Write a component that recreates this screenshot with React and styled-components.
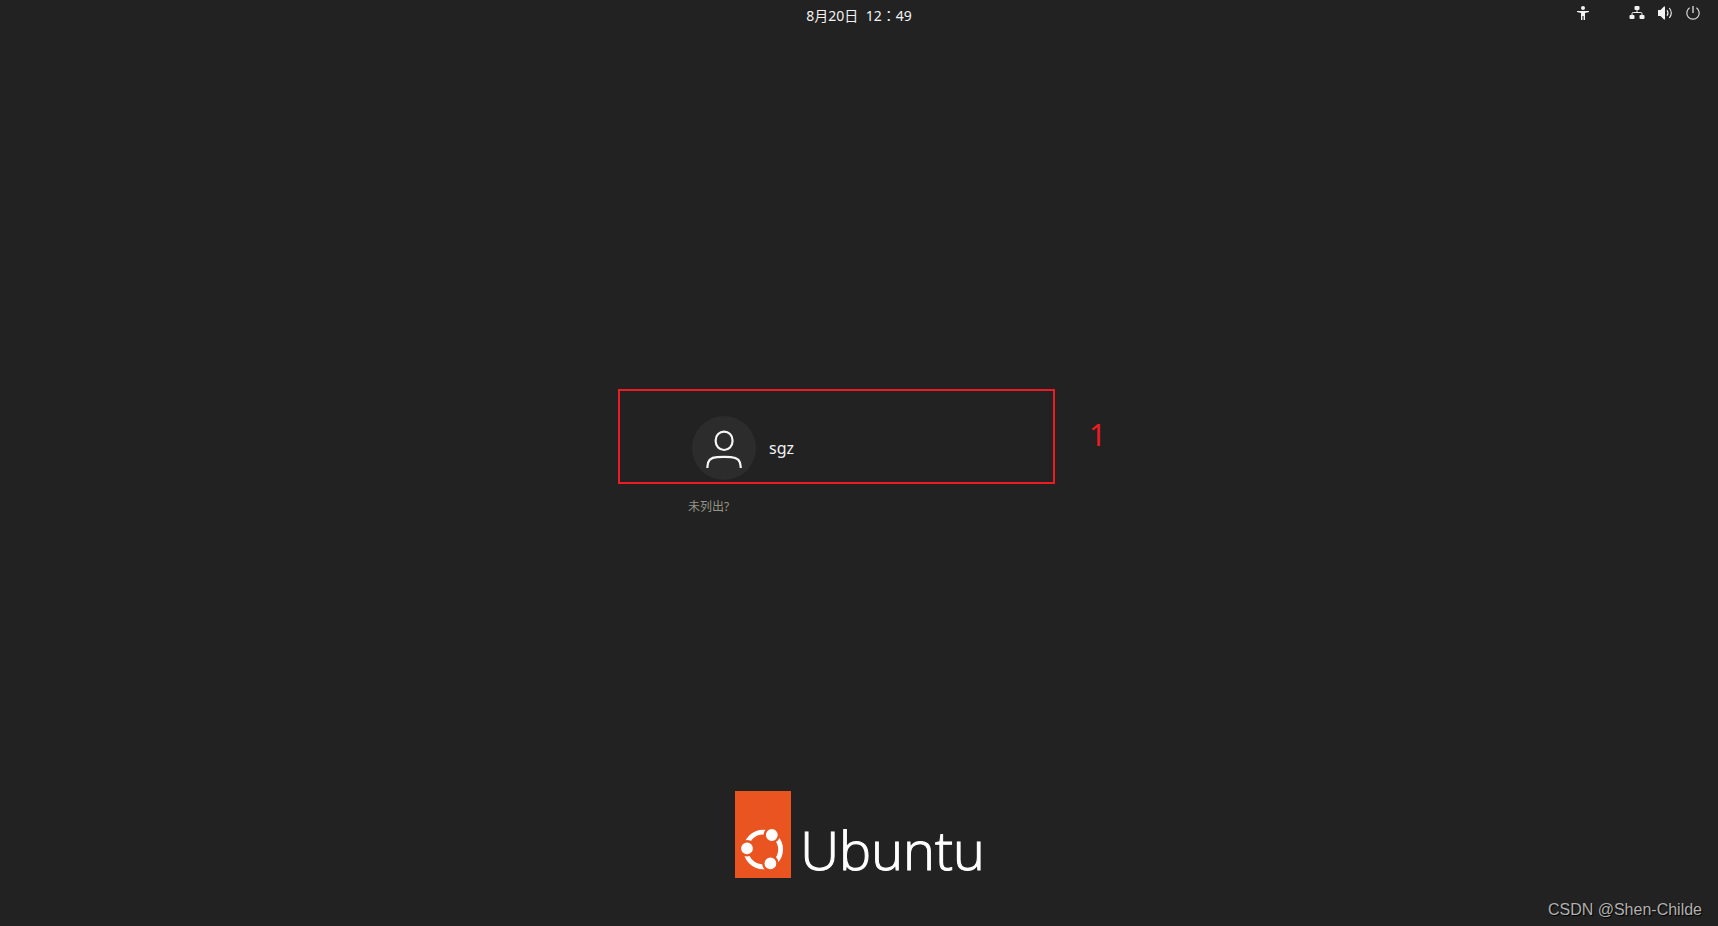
import React from 'react';
import styled, { createGlobalStyle } from 'styled-components';

const GlobalStyle = createGlobalStyle`
  * {
    box-sizing: border-box;
  }

  body {
    margin: 0;
    background: #222222;
    color: #f2f2f2;
    font-family: 'Noto Sans', 'Noto Sans CJK SC', sans-serif;
  }

  button {
    border: 0;
    padding: 0;
    background: none;
    color: inherit;
    font: inherit;
    cursor: pointer;
  }
`;

const Screen = styled.div`
  display: flex;
  flex-direction: column;
  min-height: 100vh;
  overflow: hidden;
`;

const TopBar = styled.header`
  display: grid;
  grid-template-columns: 1fr auto 1fr;
  align-items: start;
  padding: 5px 17px 0;
`;

const Clock = styled.button`
  grid-column: 2;
  font-family: 'Noto Sans', 'Noto Sans CJK TC', sans-serif;
  font-size: 14px;
  line-height: 22px;
`;

const StatusArea = styled.div`
  display: flex;
  justify-content: flex-end;
  gap: 38px;
`;

const SystemMenu = styled.div`
  display: flex;
  gap: 12px;
`;

const StatusButton = styled.button`
  display: flex;

  svg {
    display: block;
    width: 16px;
    height: 16px;
  }
`;

const Main = styled.main`
  flex: 1;
  display: flex;
  flex-direction: column;
  align-items: center;
  justify-content: center;
  padding-top: 110px;
`;

const UserList = styled.div`
  position: relative;
  width: 342px;
  max-width: 100%;
`;

const UserButton = styled.button`
  display: flex;
  align-items: center;
  gap: 13px;
  width: 100%;
  padding: 4px;
  font-size: 16px;
  line-height: 24px;
`;

const Avatar = styled.span`
  display: flex;
  align-items: center;
  justify-content: center;
  width: 64px;
  height: 64px;
  border-radius: 50%;
  background: #2c2c2c;
`;

const NotListed = styled.button`
  display: block;
  margin-top: 13px;
  color: #949488;
  font-size: 12px;
  line-height: 20px;
`;

const Highlight = styled.div`
  position: absolute;
  top: -23px;
  left: -70px;
  width: 437px;
  height: 95px;
  border: 2px solid #ed1c24;
  pointer-events: none;
`;

const StepNumber = styled.span`
  position: absolute;
  top: 8px;
  left: 100%;
  margin-left: 59px;
  color: #ed1c24;
  font-size: 30px;
  line-height: 1;
`;

const Footer = styled.footer`
  display: flex;
  justify-content: center;
  padding: 0 0 48px 2px;
`;

const Brand = styled.div`
  display: flex;
  align-items: flex-end;
  gap: 9px;
`;

const Wordmark = styled.span`
  color: #ffffff;
  font-family: 'Open Sans', 'Noto Sans', sans-serif;
  font-size: 54px;
  font-weight: 300;
  line-height: 58px;
  -webkit-text-stroke: 1px #ffffff;
`;

const Watermark = styled.div`
  position: absolute;
  right: 16px;
  bottom: 6px;
  color: #b0b0b0;
  font-family: 'Liberation Sans', Arial, sans-serif;
  font-size: 16px;
  line-height: 20px;
  text-shadow: 1px 1px 1px #000000;
`;

const AccessibilityIcon = () => (
  <svg viewBox="0 0 16 16" fill="#f2f2f2" aria-hidden="true">
    <circle cx="8" cy="3" r="2" />
    <path d="M2 6h12v1l-4 1v7H8.6v-4H7.4v4H6V8L2 7z" />
  </svg>
);

const NetworkIcon = () => (
  <svg viewBox="0 0 16 16" fill="#f2f2f2" aria-hidden="true">
    <rect x="5.5" y="1" width="5" height="4" rx="1" />
    <rect x="0.5" y="10" width="5" height="4" rx="1" />
    <rect x="10.5" y="10" width="5" height="4" rx="1" />
    <path d="M8 5v3M3 10V8.7q0-1.2 1.2-1.2h7.6q1.2 0 1.2 1.2V10" fill="none" stroke="#f2f2f2" />
  </svg>
);

const VolumeIcon = () => (
  <svg viewBox="0 0 16 16" fill="none" stroke="#f2f2f2" strokeWidth="1.1" aria-hidden="true">
    <path d="M1 5h2.5L7 1.5h1v13H7L3.5 11H1z" fill="#f2f2f2" stroke="none" />
    <path d="M10 5.2q2 2.8 0 5.6" />
    <path d="M12.3 3q4 5 0 10" />
  </svg>
);

const PowerIcon = () => (
  <svg viewBox="0 0 16 16" fill="none" stroke="#d8d8d8" strokeWidth="1.2" aria-hidden="true">
    <path d="M8 1v7" stroke="#f2f2f2" />
    <path d="M4.6 2.8a6.2 6.2 0 1 0 6.8 0" />
  </svg>
);

const UserIcon = () => (
  <svg width="40" height="40" viewBox="0 0 40 40" fill="none" stroke="#f5f5f5" strokeWidth="2.2" aria-hidden="true">
    <rect x="11.7" y="3.6" width="16.8" height="18.4" rx="8.4" />
    <path d="M3.4 40v-1.2C3.4 32 7 29.4 13 29.1q7-.5 14 0c6 .3 9.7 2.9 9.7 9.7V40" />
  </svg>
);

const UbuntuMark = () => (
  <svg width="56" height="87" viewBox="0 0 56 87" aria-hidden="true">
    <path d="M0 0h56v87H0z" fill="#e95420" />
    <circle cx="28.2" cy="58.5" r="17.4" fill="none" stroke="#ffffff" strokeWidth="4.8" />
    <g fill="#ffffff" stroke="#e95420" strokeWidth="2.4">
      <circle cx="12" cy="57.3" r="7.1" />
      <circle cx="36.8" cy="44" r="7.1" />
      <circle cx="35.4" cy="72.4" r="7.1" />
    </g>
  </svg>
);

const App = () => {
  return (
    <Screen>
      <GlobalStyle />
      <TopBar>
        <Clock>8月20日&nbsp; 12：49</Clock>
        <StatusArea>
          <StatusButton aria-label="Accessibility">
            <AccessibilityIcon />
          </StatusButton>
          <SystemMenu>
            <StatusButton aria-label="Network">
              <NetworkIcon />
            </StatusButton>
            <StatusButton aria-label="Volume">
              <VolumeIcon />
            </StatusButton>
            <StatusButton aria-label="Power">
              <PowerIcon />
            </StatusButton>
          </SystemMenu>
        </StatusArea>
      </TopBar>
      <Main>
        <UserList>
          <UserButton>
            <Avatar>
              <UserIcon />
            </Avatar>
            sgz
          </UserButton>
          <NotListed>未列出?</NotListed>
          <Highlight />
          <StepNumber>1</StepNumber>
        </UserList>
      </Main>
      <Footer>
        <Brand role="img" aria-label="Ubuntu">
          <UbuntuMark />
          <Wordmark>Ubuntu</Wordmark>
        </Brand>
      </Footer>
      <Watermark>CSDN @Shen-Childe</Watermark>
    </Screen>
  );
};

export default App;
